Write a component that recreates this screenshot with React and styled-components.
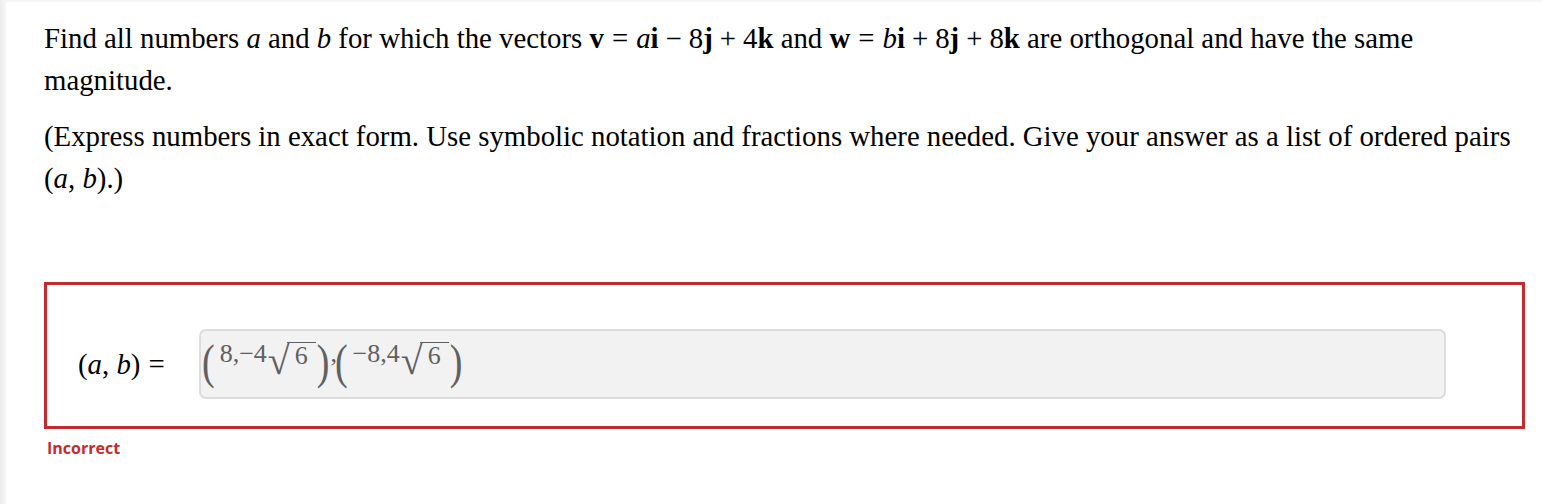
import React from 'react'
import styled, { createGlobalStyle } from 'styled-components'

const GlobalStyle = createGlobalStyle`
  html, body {
    margin: 0;
    padding: 0;
    background: #f3f3f3;
  }
  #root {
    min-height: 504px;
  }
`

const Page = styled.div`
  display: flex;
  flex-direction: column;
  min-height: 504px;
  padding: 2px 0 0 6px;
  box-sizing: border-box;
  background: linear-gradient(90deg, #ececec 0px, #f6f6f6 6px);
`

const Card = styled.div`
  flex: 1;
  background: #ffffff;
  padding: 15px 17px 40px 38px;
  font-family: 'Liberation Serif', 'Times New Roman', serif;
  color: #000;
`

const Paragraph = styled.p`
  margin: 0 0 14px 0;
  font-size: 28.8px;
  line-height: 42px;
`

const Var = styled.i`
  font-style: italic;
`

const Vec = styled.b`
  font-weight: bold;
`

const Op = styled.span`
  padding: 0 ${(p) => (p.$wide ? 8 : 7)}px;
`

const AnswerBox = styled.div`
  margin-top: 83px;
  border: 3px solid #c42b2c;
  display: flex;
  align-items: center;
  padding: 44px 76px 27px 31px;
`

const Label = styled.div`
  font-size: 28.8px;
  width: 121px;
  flex-shrink: 0;
  white-space: nowrap;
`

const Input = styled.div`
  flex: 1;
  height: 66px;
  background: #f2f2f2;
  border: 2px solid #dcdcdc;
  border-radius: 7px;
  display: flex;
  align-items: flex-start;
  padding: 0 0 0 1px;
  color: #606060;
  font-size: 26px;
  line-height: 26px;
`

const Paren = styled.span`
  display: inline-block;
  font-size: 38px;
  line-height: 38px;
  margin-top: 6px;
  transform: scaleY(1.27);
  transform-origin: top;
  margin-left: ${(p) => (p.$close ? 1 : 0)}px;
  margin-right: ${(p) => (p.$close ? 0 : 5)}px;
`

const Num = styled.span`
  display: inline-block;
  margin-top: 10px;
  white-space: nowrap;
`

const Radical = styled.span`
  display: inline-flex;
  align-items: flex-start;
  margin-left: 1px;
`

const RootSign = styled.span`
  display: inline-block;
  font-size: 40px;
  line-height: 40px;
  margin-top: 10px;
  margin-right: -3px;
`

const Radicand = styled.span`
  display: inline-block;
  margin-top: 11px;
  border-top: 1.5px solid #606060;
  padding: 0 8px 0 8px;
`

const Comma = styled.span`
  display: inline-block;
  margin-top: 10px;
  margin-left: 1px;
  margin-right: -2px;
`

const Feedback = styled.div`
  margin-top: 8px;
  margin-left: 3px;
  font-family: 'Open Sans', 'Noto Sans', sans-serif;
  font-weight: 700;
  font-size: 16px;
  line-height: 22px;
  color: #c42b2c;
`

const Sqrt = ({ children }) => (
  <Radical>
    <RootSign>√</RootSign>
    <Radicand>{children}</Radicand>
  </Radical>
)

const Pair = ({ first, coef }) => (
  <>
    <Paren>(</Paren>
    <Num>
      {first},{coef}
    </Num>
    <Sqrt>6</Sqrt>
    <Paren $close>)</Paren>
  </>
)

const App = () => {
  return (
    <>
      <GlobalStyle />
      <Page>
        <Card>
          <Paragraph>
            Find all numbers <Var>a</Var> and <Var>b</Var> for which the vectors{' '}
            <Vec>v</Vec>
            <Op $wide>=</Op>
            <Var>a</Var>
            <Vec>i</Vec>
            <Op>−</Op>8<Vec>j</Vec>
            <Op>+</Op>4<Vec>k</Vec> and <Vec>w</Vec>
            <Op $wide>=</Op>
            <Var>b</Var>
            <Vec>i</Vec>
            <Op>+</Op>8<Vec>j</Vec>
            <Op>+</Op>8<Vec>k</Vec> are orthogonal and have the same magnitude.
          </Paragraph>
          <Paragraph>
            (Express numbers in exact form. Use symbolic notation and fractions where
            needed. Give your answer as a list of ordered pairs (<Var>a</Var>,{' '}
            <Var>b</Var>).)
          </Paragraph>
          <AnswerBox>
            <Label>
              (<Var>a</Var>, <Var>b</Var>)<Op $wide>=</Op>
            </Label>
            <Input>
              <Pair first="8" coef="−4" />
              <Comma>,</Comma>
              <Pair first="−8" coef="4" />
            </Input>
          </AnswerBox>
          <Feedback>Incorrect</Feedback>
        </Card>
      </Page>
    </>
  )
}

export default App
